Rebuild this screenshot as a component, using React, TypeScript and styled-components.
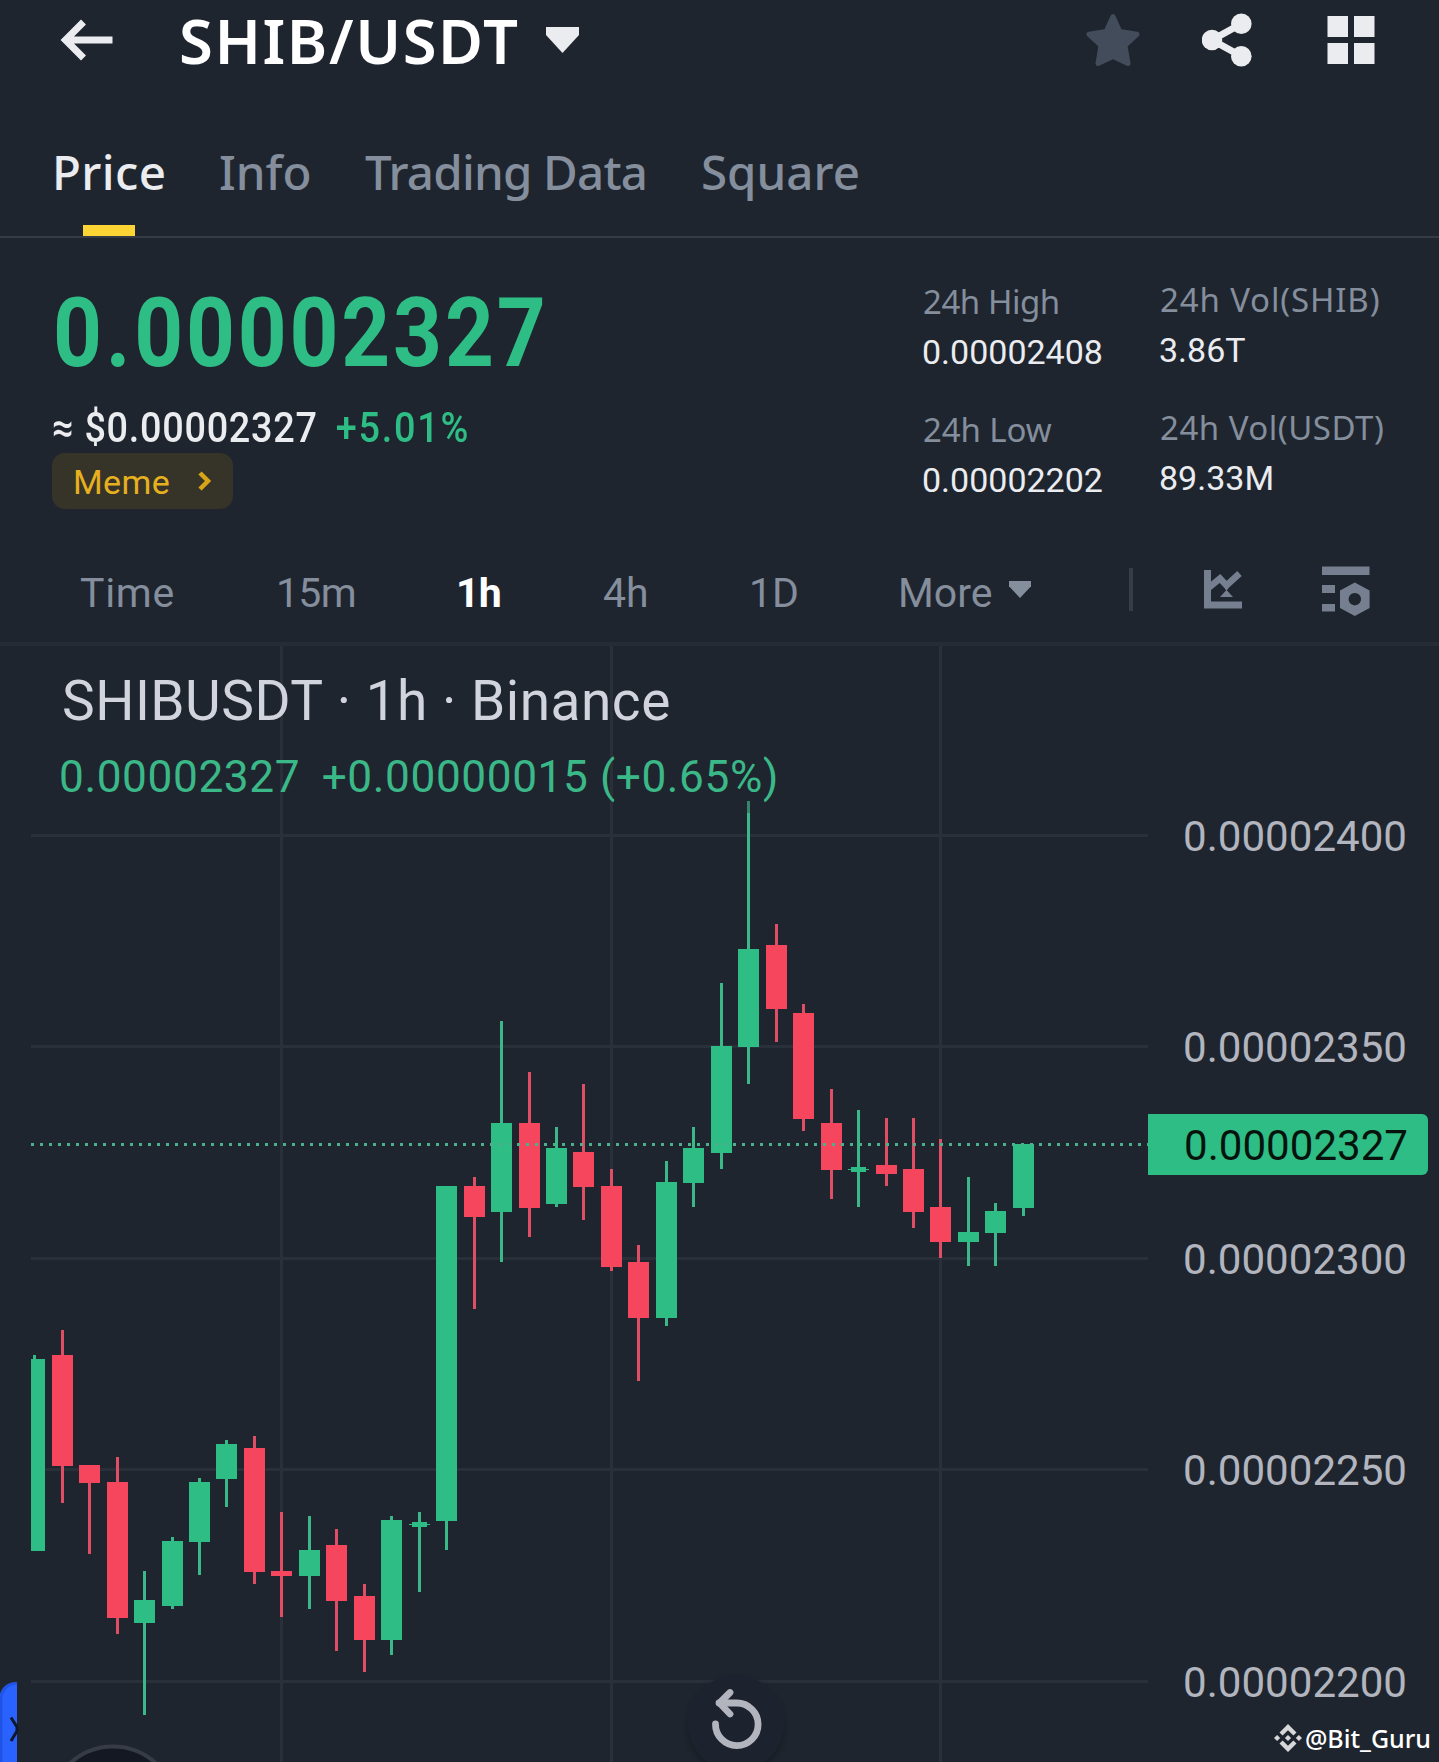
import React from "react";
import styled, { createGlobalStyle } from "styled-components";

const color = {
  bg: "#1f252f",
  text: "#eaecef",
  muted: "#848e9c",
  icon: "#757f90",
  up: "#2ebd85",
  down: "#f6465d",
  upWick: "#3bb888",
  downWick: "#e04e66",
  grid: "#2a303a",
};

const ui = `Roboto, "Liberation Sans", sans-serif`;
const label = `"Noto Sans", "Open Sans", sans-serif`;

const GlobalStyle = createGlobalStyle`
  * { box-sizing: border-box; }
  body { margin: 0; background: ${color.bg}; }
`;

const Screen = styled.main`
  position: relative;
  width: 1439px;
  height: 1762px;
  overflow: hidden;
  display: flex;
  flex-direction: column;
  background: ${color.bg};
  font-family: ${ui};
  color: ${color.text};
  white-space: nowrap;
`;

const Header = styled.header`
  height: 80px;
  flex: none;
  display: flex;
  align-items: center;
  padding: 0 64px 0 60px;
  svg { display: block; flex: none; }
`;

const Title = styled.h1`
  margin: 0 15px 0 66px;
  width: 352px;
  font: 600 61.5px/81px ${label};
  letter-spacing: 1.6px;
  color: #fff;
`;

const HeaderActions = styled.div`
  margin-left: auto;
  display: flex;
  align-items: center;
  gap: 62px;
  & > :last-child { margin-left: 13px; }
`;

const Tabs = styled.nav`
  height: 158px;
  flex: none;
  display: grid;
  grid-template-columns: 167px 146px 336px 200px;
  padding-left: 52px;
  border-bottom: 2px solid #343b46;
`;

const Tab = styled.div<{ $active?: boolean; $track?: number }>`
  display: flex;
  flex-direction: column;
  justify-content: space-between;
  padding-top: 57px;
  font: 500 47.5px/70px ${label};
  letter-spacing: ${(p) => p.$track ?? 0}px;
  color: ${(p) => (p.$active ? color.text : color.muted)};
`;

const TabMarker = styled.span`
  width: 52px;
  height: 11px;
  margin-left: 30.5px;
  background: #fcd535;
`;

const Summary = styled.section`
  height: 307px;
  flex: none;
  display: flex;
  justify-content: space-between;
  padding: 38px 40px 0 52px;
`;

const Quote = styled.div`
  display: flex;
  flex-direction: column;
  align-items: flex-start;
`;

const LastPrice = styled.div`
  margin-left: 1px;
  font: 700 97px/114px ${ui};
  letter-spacing: 3.2px;
  color: ${color.up};
  transform: scaleX(0.88);
  transform-origin: left;
`;

const Dot = styled.span`
  margin: 0 1px;
`;

const QuoteRow = styled.div`
  display: flex;
  gap: 20px;
  margin-top: 12px;
  font: 500 42px/52px ${ui};
  letter-spacing: 0.8px;
  transform: scaleX(0.9);
  transform-origin: left;
`;

const Change = styled.span`
  color: ${color.up};
  letter-spacing: 2px;
`;

const Tag = styled.a`
  display: flex;
  align-items: center;
  justify-content: space-between;
  width: 181px;
  height: 56px;
  margin-top: -1px;
  padding: 0 21px 0 21px;
  border-radius: 13px;
  background: #363329;
  color: #e6b01e;
  font: 400 34px/56px ${ui};
  letter-spacing: 0.4px;
`;

const TagName = styled.span`
  padding-top: 2px;
`;

const Stats = styled.div`
  display: grid;
  grid-template-columns: 237px 225px;
  width: 477px;
`;

const StatColumn = styled.dl<{ $lift?: number }>`
  margin: ${(p) => 0 - (p.$lift ?? 0)}px 0 0;
`;

const Stat = styled.div`
  height: 128px;
`;

const StatName = styled.dt<{ $track?: number }>`
  height: 50px;
  padding-left: 1px;
  font: 400 33px/52px ${label};
  letter-spacing: ${(p) => p.$track ?? 0}px;
  color: ${color.muted};
`;

const StatValue = styled.dd`
  margin: 0;
  font: 400 34px/52px ${ui};
`;

const Toolbar = styled.nav`
  height: 101px;
  flex: none;
  display: grid;
  grid-template-columns: 196px 180px 147px 146px 149px 231px 74px 118px 50px;
  padding-left: 80px;
  border-bottom: 4px solid #262c36;
  svg { display: block; }
`;

const Interval = styled.button<{ $active?: boolean; $track?: number }>`
  display: flex;
  align-items: flex-start;
  gap: 17px;
  padding: 22px 0 0;
  border: 0;
  background: none;
  text-align: left;
  font: ${(p) => (p.$active ? 700 : 400)} 41px/52px ${ui};
  letter-spacing: ${(p) => p.$track ?? 0}px;
  color: ${(p) => (p.$active ? "#fff" : color.muted)};
  svg { margin-top: 14px; }
`;

const Divider = styled.span`
  width: 4px;
  height: 43px;
  margin-top: 23px;
  background: #363d48;
`;

const ToolIcon = styled.span`
  padding-top: 20px;
`;

const Chart = styled.section`
  position: relative;
  flex: 1;
  display: flex;
`;

const Plot = styled.svg`
  display: block;
  flex: none;
`;

const PriceAxis = styled.div`
  display: flex;
  flex-direction: column;
  padding: 85px 0 0 35px;
`;

const AxisLabel = styled.span`
  height: 211.4px;
  font: 400 42.1px/211.4px ${ui};
  color: #b2b5be;
`;

const PriceTag = styled.div`
  position: absolute;
  left: 1148px;
  top: 468px;
  width: 280px;
  height: 61px;
  padding-left: 36px;
  border-radius: 0 6px 6px 0;
  background: ${color.up};
  color: #06130d;
  font: 400 42.1px/64px ${ui};
`;

const Legend = styled.div`
  position: absolute;
  left: 60px;
  top: 20px;
`;

const LegendTitle = styled.div`
  padding-left: 2px;
  font: 400 55px/70px ${ui};
  letter-spacing: 0.5px;
  color: #d1d4dc;
`;

const LegendValues = styled.div`
  display: flex;
  gap: 21.5px;
  margin: 14px 0 0 -1px;
  font: 400 44.2px/54px ${ui};
  letter-spacing: 0.6px;
  color: #3bb888;
`;

const Watermark = styled.div`
  position: absolute;
  right: 8px;
  bottom: 6px;
  display: flex;
  align-items: center;
  gap: 3px;
  font: 500 25px/36px ${label};
  color: #fff;
`;

type Candle = [x: number, open: number, close: number, high: number, low: number, up: 0 | 1];

const candles: Candle[] = [
  [52, 1355, 1466, 1330, 1503, 0],
  [79, 1465, 1483, 1465, 1554, 0],
  [107, 1482, 1618, 1457, 1634, 0],
  [134, 1600, 1623, 1571, 1715, 1],
  [162, 1541, 1606, 1537, 1609, 1],
  [189, 1482, 1542, 1478, 1575, 1],
  [216, 1444, 1479, 1440, 1507, 1],
  [244, 1448, 1572, 1436, 1584, 0],
  [271, 1571, 1576, 1512, 1617, 0],
  [299, 1550, 1576, 1516, 1609, 1],
  [326, 1545, 1601, 1529, 1651, 0],
  [354, 1596, 1640, 1584, 1672, 0],
  [381, 1520, 1640, 1516, 1655, 1],
  [409, 1522, 1527, 1512, 1592, 1],
  [436, 1186, 1521, 1186, 1550, 1],
  [464, 1186, 1217, 1177, 1309, 0],
  [491, 1123, 1212, 1021, 1262, 1],
  [519, 1123, 1208, 1072, 1237, 0],
  [546, 1148, 1204, 1127, 1207, 1],
  [573, 1152, 1187, 1084, 1220, 0],
  [601, 1186, 1267, 1169, 1271, 0],
  [628, 1262, 1318, 1245, 1381, 0],
  [656, 1182, 1318, 1161, 1326, 1],
  [683, 1148, 1183, 1127, 1207, 1],
  [711, 1046, 1153, 983, 1169, 1],
  [738, 949, 1047, 813, 1084, 1],
  [766, 945, 1009, 924, 1042, 0],
  [793, 1013, 1119, 1004, 1131, 0],
  [821, 1123, 1170, 1089, 1199, 0],
  [848, 1167, 1172, 1110, 1207, 1],
  [876, 1165, 1174, 1118, 1186, 0],
  [903, 1169, 1212, 1118, 1228, 0],
  [930, 1207, 1242, 1139, 1258, 0],
  [958, 1232, 1242, 1177, 1266, 1],
  [985, 1211, 1233, 1203, 1266, 1],
  [1013, 1144, 1208, 1144, 1216, 1],
];

const gridRows = [834, 1045, 1257, 1468, 1680];
const gridColumns = [280, 610, 939];
const axis = ["0.00002400", "0.00002350", "0.00002300", "0.00002250", "0.00002200"];

function CandleShape({ data }: { data: Candle }) {
  const [x, top, bottom, high, low, up] = data;
  const doji = up === 1 && bottom - top <= 5;
  return (
    <g fill={up ? color.up : color.down}>
      <rect x={x + 9} y={high} width={3} height={low - high} fill={up ? color.upWick : color.downWick} />
      {doji ? (
        <>
          <rect x={x} y={top + 2} width={21} height={1} />
          <rect x={x + 3} y={top} width={15} height={5} />
        </>
      ) : (
        <rect x={x} y={top} width={21} height={bottom - top} />
      )}
    </g>
  );
}

function CandlePlot() {
  return (
    <Plot width="1148" height="1116" viewBox="0 646 1148 1116" shapeRendering="crispEdges">
      {gridRows.map((y) => (
        <rect key={y} x={31} y={y} width={1117} height={3} fill={color.grid} />
      ))}
      {gridColumns.map((x) => (
        <rect key={x} x={x} y={646} width={3} height={1116} fill={color.grid} />
      ))}
      <rect x={33} y={1355} width={3} height={6} fill={color.upWick} />
      <rect x={31} y={1359} width={14} height={192} fill={color.up} />
      <rect x={747} y={801} width={3} height={12} fill="#36846c" />
      {candles.map((c) => (
        <CandleShape key={c[0]} data={c} />
      ))}
      <line x1="31" x2="1148" y1="1144.5" y2="1144.5" stroke="#4db08c" strokeWidth="3" strokeDasharray="3 6" />

      <g shapeRendering="geometricPrecision">
        <path d="M0 1762V1694Q4 1682 17 1682V1762Z" fill="#2962ff" />
        <path d="M1.2 1762V1697Q4 1684 17 1683.2" fill="none" stroke="#1e53e5" strokeWidth="2.4" />
        <path d="M11 1717.5L17 1727V1731L11 1741" fill="none" stroke="#10182c" strokeWidth="3" />
        <circle cx="113" cy="1809.500" r="63" fill="#131822" stroke="#363b45" strokeWidth="4" />
        <defs>
          <filter id="discShadow" x="-30%" y="-30%" width="160%" height="160%">
            <feDropShadow dx="0" dy="4" stdDeviation="4" floodColor="#000" floodOpacity="0.3" />
          </filter>
        </defs>
        <circle cx="736" cy="1723" r="48" fill="#1e222d" filter="url(#discShadow)" />
        <g fill="none" stroke="#b2b5be" strokeWidth="6.8" strokeLinecap="round" strokeLinejoin="round">
          <path d="M715.5 1724A21.3 21.3 0 1 0 736.5 1703H719" />
          <path d="M730 1692.500L719.500 1703L730 1714" />
        </g>
      </g>
    </Plot>
  );
}

const BackArrow = () => (
  <svg width="53" height="44" viewBox="60 18.500 53 44" fill="none" stroke={color.text} strokeWidth="7">
    <path d="M65 40.500H112.500M83.500 22.500L65.500 40.500L83.500 58.500" />
  </svg>
);

const Caret = ({ w, h, fill }: { w: number; h: number; fill: string }) => (
  <svg width={w} height={h} viewBox="0 0 33 26" preserveAspectRatio="none">
    <path d="M0 0H33V8L16.500 26L0 8Z" fill={fill} />
  </svg>
);

const StarIcon = () => (
  <svg width="54" height="54" viewBox="1086.500 13 54 54">
    <path
      d="M1113.500 16.500L1120.300 31.500L1137.500 34.300L1125.500 45.500L1128.500 63.500L1113.500 56.500L1098.500 63.500L1101.500 45.500L1089.500 34.300L1106.700 31.500Z"
      fill="#434c5b"
      stroke="#434c5b"
      strokeWidth="5"
      strokeLinejoin="round"
    />
  </svg>
);

const ShareIcon = () => (
  <svg width="50" height="54" viewBox="1202 13 50 54" fill={color.text}>
    <path d="M1241 24L1212 40L1241 56" fill="none" stroke={color.text} strokeWidth="7" />
    <circle cx="1241.300" cy="23.800" r="10.300" />
    <circle cx="1212" cy="40" r="10.300" />
    <circle cx="1241.300" cy="56.200" r="10.300" />
  </svg>
);

const GridIcon = () => (
  <svg width="48" height="48" viewBox="0 0 48 48" fill={color.text}>
    <path d="M.5 0h20.500v21H.5zM27 0h20.500v21H27zM.5 27h20.500v21H.5zM27 27h20.500v21H27z" />
  </svg>
);

const IndicatorIcon = () => (
  <svg width="40" height="52" viewBox="1203 565 40 52" fill={color.icon}>
    <path d="M1204 570H1211V601.500H1242V608.500H1204Z" />
    <path d="M1209 587.500L1220 578.500L1226.500 585.500L1239.500 573.500" fill="none" stroke={color.icon} strokeWidth="6.500" />
    <path d="M1220 597L1226.500 590L1233 597Z" />
    <path d="M1224 587h5l-2.500 4z" />
  </svg>
);

const SettingsIcon = () => (
  <svg width="50" height="52" viewBox="1321 565 50 52" fill={color.icon}>
    <path d="M1322 566.500h47.500v8.500H1322zM1322 585h13v8h-13zM1322 604h13v7.500h-13z" />
    <path
      fillRule="evenodd"
      d="M1354.800 582.500L1369.600 590.500V608L1354.800 616L1340 608V590.500ZM1354.800 593a6.200 6.200 0 1 0 .01 0Z"
    />
  </svg>
);

const ExchangeLogo = () => (
  <svg width="28" height="28" viewBox="0 0 28 28" fill="#d6d7d8">
    <path d="M14 0L22.500 8.500L19.400 11.600L14 6.200L8.600 11.600L5.500 8.500Z" />
    <path d="M14 28L22.500 19.500L19.400 16.400L14 21.800L8.600 16.400L5.500 19.500Z" />
    <path d="M3.100 10.900L6.200 14L3.100 17.100L0 14ZM24.900 10.900L28 14L24.900 17.100L21.800 14ZM14 10.900L17.100 14L14 17.100L10.900 14Z" />
  </svg>
);

export default function App() {
  return (
    <Screen>
      <GlobalStyle />
      <Header>
        <BackArrow />
        <Title>SHIB/USDT</Title>
        <Caret w={33} h={26} fill={color.text} />
        <HeaderActions>
          <StarIcon />
          <ShareIcon />
          <GridIcon />
        </HeaderActions>
      </Header>

      <Tabs>
        <Tab $active $track={0.4}>
          Price
          <TabMarker />
        </Tab>
        <Tab>Info</Tab>
        <Tab $track={-0.8}>Trading Data</Tab>
        <Tab>Square</Tab>
      </Tabs>

      <Summary>
        <Quote>
          <LastPrice>
            0<Dot>.</Dot>00002327
          </LastPrice>
          <QuoteRow>
            <span>≈ $0.00002327</span>
            <Change>+5.01%</Change>
          </QuoteRow>
          <Tag>
            <TagName>Meme</TagName>
            <svg width="14" height="20" viewBox="0 0 14 20" fill="none" stroke="#d9a416" strokeWidth="4.500">
              <path d="M2 2L10 10L2 18" />
            </svg>
          </Tag>
        </Quote>
        <Stats>
          <StatColumn>
            <Stat>
              <StatName $track={-0.45}>24h High</StatName>
              <StatValue>0.00002408</StatValue>
            </Stat>
            <Stat>
              <StatName $track={-0.1}>24h Low</StatName>
              <StatValue>0.00002202</StatValue>
            </Stat>
          </StatColumn>
          <StatColumn $lift={2}>
            <Stat>
              <StatName $track={0.85}>24h Vol(SHIB)</StatName>
              <StatValue>3.86T</StatValue>
            </Stat>
            <Stat>
              <StatName $track={0.5}>24h Vol(USDT)</StatName>
              <StatValue>89.33M</StatValue>
            </Stat>
          </StatColumn>
        </Stats>
      </Summary>

      <Toolbar>
        <Interval $track={0.7}>Time</Interval>
        <Interval $track={-0.7}>15m</Interval>
        <Interval $active $track={-0.8}>1h</Interval>
        <Interval>4h</Interval>
        <Interval>1D</Interval>
        <Interval>
          More
          <Caret w={22} h={17} fill={color.muted} />
        </Interval>
        <Divider />
        <ToolIcon>
          <IndicatorIcon />
        </ToolIcon>
        <ToolIcon>
          <SettingsIcon />
        </ToolIcon>
      </Toolbar>

      <Chart>
        <CandlePlot />
        <PriceAxis>
          {axis.map((price) => (
            <AxisLabel key={price}>{price}</AxisLabel>
          ))}
        </PriceAxis>
        <PriceTag>0.00002327</PriceTag>
        <Legend>
          <LegendTitle>SHIBUSDT · 1h · Binance</LegendTitle>
          <LegendValues>
            <span>0.00002327</span>
            <span>+0.00000015 (+0.65%)</span>
          </LegendValues>
        </Legend>
      </Chart>

      <Watermark>
        <ExchangeLogo />
        @Bit_Guru
      </Watermark>
    </Screen>
  );
}
